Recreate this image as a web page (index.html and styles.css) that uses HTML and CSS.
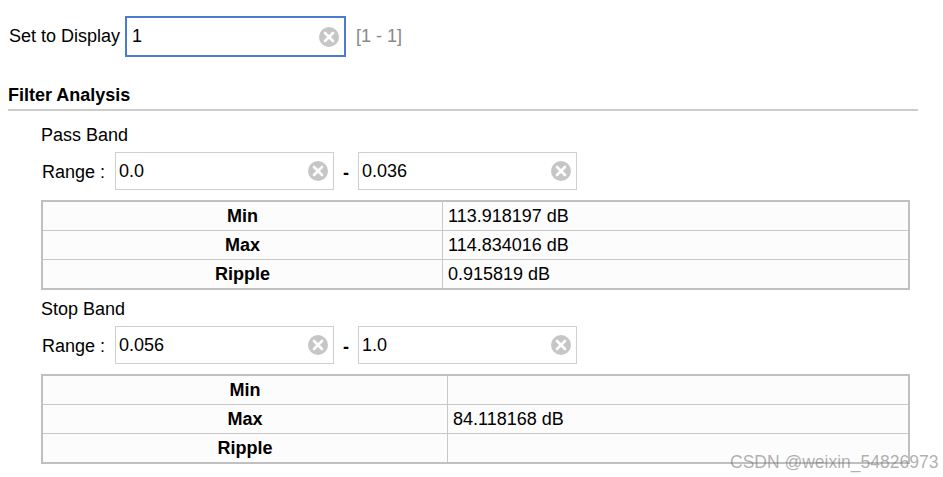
FILE: index.html
```html
<!DOCTYPE html>
<html lang="en">
<head>
    <meta charset="UTF-8">
    <meta name="viewport" content="width=device-width, initial-scale=1.0">
    <title>Filter Analysis</title>
    <link rel="stylesheet" href="styles.css">
</head>
<body>
    <div class="page">
        <div class="display-row">
            <label for="setDisplay">Set to Display</label>
            <div class="field field-focused">
                <input id="setDisplay" type="text" value="1">
                <span class="clear">
                    <svg width="20" height="20" viewBox="0 0 20 20"><circle cx="10" cy="10" r="10" fill="#c6c6c6"/><path d="M6 6 L14 14 M14 6 L6 14" stroke="#fff" stroke-width="2.6" stroke-linecap="round"/></svg>
                </span>
            </div>
            <span class="range-hint">[1 - 1]</span>
        </div>

        <div class="section-title">Filter Analysis</div>

        <div class="band band-pass">
            <div class="band-title">Pass Band</div>
            <div class="range-row">
                <span class="range-label">Range :</span>
                <div class="field">
                    <input type="text" value="0.0">
                    <span class="clear">
                        <svg width="20" height="20" viewBox="0 0 20 20"><circle cx="10" cy="10" r="10" fill="#c6c6c6"/><path d="M6 6 L14 14 M14 6 L6 14" stroke="#fff" stroke-width="2.6" stroke-linecap="round"/></svg>
                    </span>
                </div>
                <span class="dash">-</span>
                <div class="field">
                    <input type="text" value="0.036">
                    <span class="clear">
                        <svg width="20" height="20" viewBox="0 0 20 20"><circle cx="10" cy="10" r="10" fill="#c6c6c6"/><path d="M6 6 L14 14 M14 6 L6 14" stroke="#fff" stroke-width="2.6" stroke-linecap="round"/></svg>
                    </span>
                </div>
            </div>
            <table class="result-table pass-table">
                <tr><th>Min</th><td>113.918197 dB</td></tr>
                <tr><th>Max</th><td>114.834016 dB</td></tr>
                <tr><th>Ripple</th><td>0.915819 dB</td></tr>
            </table>
        </div>

        <div class="band band-stop">
            <div class="band-title">Stop Band</div>
            <div class="range-row">
                <span class="range-label">Range :</span>
                <div class="field">
                    <input type="text" value="0.056">
                    <span class="clear">
                        <svg width="20" height="20" viewBox="0 0 20 20"><circle cx="10" cy="10" r="10" fill="#c6c6c6"/><path d="M6 6 L14 14 M14 6 L6 14" stroke="#fff" stroke-width="2.6" stroke-linecap="round"/></svg>
                    </span>
                </div>
                <span class="dash">-</span>
                <div class="field">
                    <input type="text" value="1.0">
                    <span class="clear">
                        <svg width="20" height="20" viewBox="0 0 20 20"><circle cx="10" cy="10" r="10" fill="#c6c6c6"/><path d="M6 6 L14 14 M14 6 L6 14" stroke="#fff" stroke-width="2.6" stroke-linecap="round"/></svg>
                    </span>
                </div>
            </div>
            <table class="result-table stop-table">
                <tr><th>Min</th><td></td></tr>
                <tr><th>Max</th><td>84.118168 dB</td></tr>
                <tr><th>Ripple</th><td></td></tr>
            </table>
        </div>

        <div class="watermark">CSDN @weixin_54826973</div>
    </div>
</body>
</html>
```

FILE: styles.css
```css
body {
    margin: 0;
    padding: 0;
    font-family: "Liberation Sans", Arial, sans-serif;
    font-size: 18px;
    color: #000;
    background-color: #fff;
}

.page {
    position: relative;
    width: 943px;
    height: 477px;
    padding: 16px 0 0 8px;
    box-sizing: border-box;
    overflow: hidden;
}

/* top row */
.display-row {
    display: flex;
    align-items: center;
    height: 41px;
    padding-left: 1px;
}

.display-row label {
    margin-right: 5px;
}

.field {
    display: flex;
    align-items: center;
    box-sizing: border-box;
    width: 219px;
    height: 38px;
    border: 1px solid #cfcfcf;
    background-color: #fff;
    padding: 0 5px 0 3px;
}

.field input {
    flex: 1;
    min-width: 0;
    border: none;
    outline: none;
    padding: 0;
    margin: 0;
    font-family: inherit;
    font-size: 18px;
    color: #000;
    background: transparent;
}

.field-focused {
    width: 221px;
    height: 41px;
    border: 2px solid #4a7bd0;
    padding: 0 5px 0 5px;
}

.clear {
    display: flex;
    width: 20px;
    height: 20px;
}

.range-hint {
    margin-left: 10px;
    color: #8a8a8a;
}

/* section heading */
.section-title {
    margin-top: 29px;
    width: 910px;
    font-weight: bold;
    line-height: 18px;
    padding-bottom: 5px;
    border-bottom: 2px solid #cccccc;
}

.band {
    margin-left: 33px;
    width: 869px;
}

.band-pass {
    margin-top: 14px;
}

.band-stop {
    margin-top: 9px;
}

.band-title {
    line-height: 20px;
}

.range-row {
    display: flex;
    align-items: center;
    margin-top: 7px;
}

.range-label {
    flex: 0 0 74px;
    padding-left: 1px;
    box-sizing: border-box;
    padding-top: 3px;
}

.dash {
    width: 24px;
    text-align: center;
    padding-top: 4px;
    font-weight: bold;
}

/* result tables */
.result-table {
    margin-top: 10px;
    width: 869px;
    border-collapse: collapse;
    border: 2px solid #c0c0c0;
    background-color: #fcfcfc;
}

.result-table th,
.result-table td {
    height: 28px;
    padding: 0 5px;
    border: 1px solid #c8c8c8;
    font-size: 18px;
}

.result-table th {
    text-align: center;
    font-weight: bold;
}

.result-table td {
    text-align: left;
}

.pass-table th {
    width: 389px;
}

.stop-table th {
    width: 394px;
}

.watermark {
    position: absolute;
    left: 730px;
    top: 452px;
    font-size: 17.5px;
    color: rgba(110, 110, 110, 0.55);
    white-space: nowrap;
}
```
